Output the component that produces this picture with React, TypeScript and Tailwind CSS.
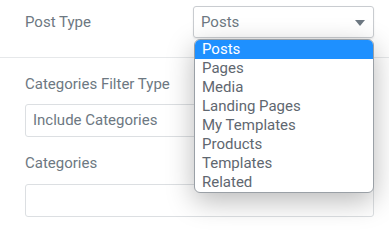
import React from "react";

const postTypes = [
  "Posts",
  "Pages",
  "Media",
  "Landing Pages",
  "My Templates",
  "Products",
  "Templates",
  "Related",
];

export default function App() {
  return (
    <div className="relative w-[389px] h-[236px] overflow-hidden bg-white font-['Roboto',sans-serif] text-[15px] text-[#6d7882]">
      {/* post type row */}
      <div className="flex items-center pl-[25px] pr-[15px] pt-[6px] pb-[19px] border-b border-[#e6e8ea]">
        <div className="flex-1 leading-5">Post Type</div>
        <div className="relative w-[181px] h-[32px] flex items-center pl-[7px] border border-[#c9ccd0] rounded-[3px] shadow-[0_1px_2px_rgba(0,0,0,0.08)]">
          <span className="leading-5">Posts</span>
          <svg className="absolute right-[8px] top-[13px]" width="10" height="6" viewBox="0 0 10 6">
            <path d="M0 0h10L5 6z" fill="#6d7882" />
          </svg>
        </div>
      </div>

      {/* categories section */}
      <div className="flex flex-col pl-[25px] pr-[15px] pt-[16px]">
        <div className="leading-5">Categories Filter Type</div>
        <div className="mt-[10px] h-[33px] flex items-center pl-[7px] border border-[#dcdfe2] rounded-[3px]">
          Include Categories
        </div>
        <div className="mt-[16px] leading-5">Categories</div>
        <div className="mt-[11px] h-[33px] border border-[#dcdfe2] rounded-[3px]" />
      </div>

      {/* open dropdown */}
      <div className="absolute left-[194px] top-[39px] w-[180px] border border-[#9aa0a6] rounded-[6px] bg-white overflow-hidden shadow-[0_8px_28px_rgba(0,0,0,0.28)]">
        {postTypes.map((t, i) => (
          <div
            key={t}
            className={
              i === 0
                ? "h-[19px] leading-[19px] pl-[7px] bg-[#1e90ff] text-white"
                : "h-[19px] leading-[19px] pl-[7px] text-[#5f6770]"
            }
          >
            {t}
          </div>
        ))}
      </div>
    </div>
  );
}
